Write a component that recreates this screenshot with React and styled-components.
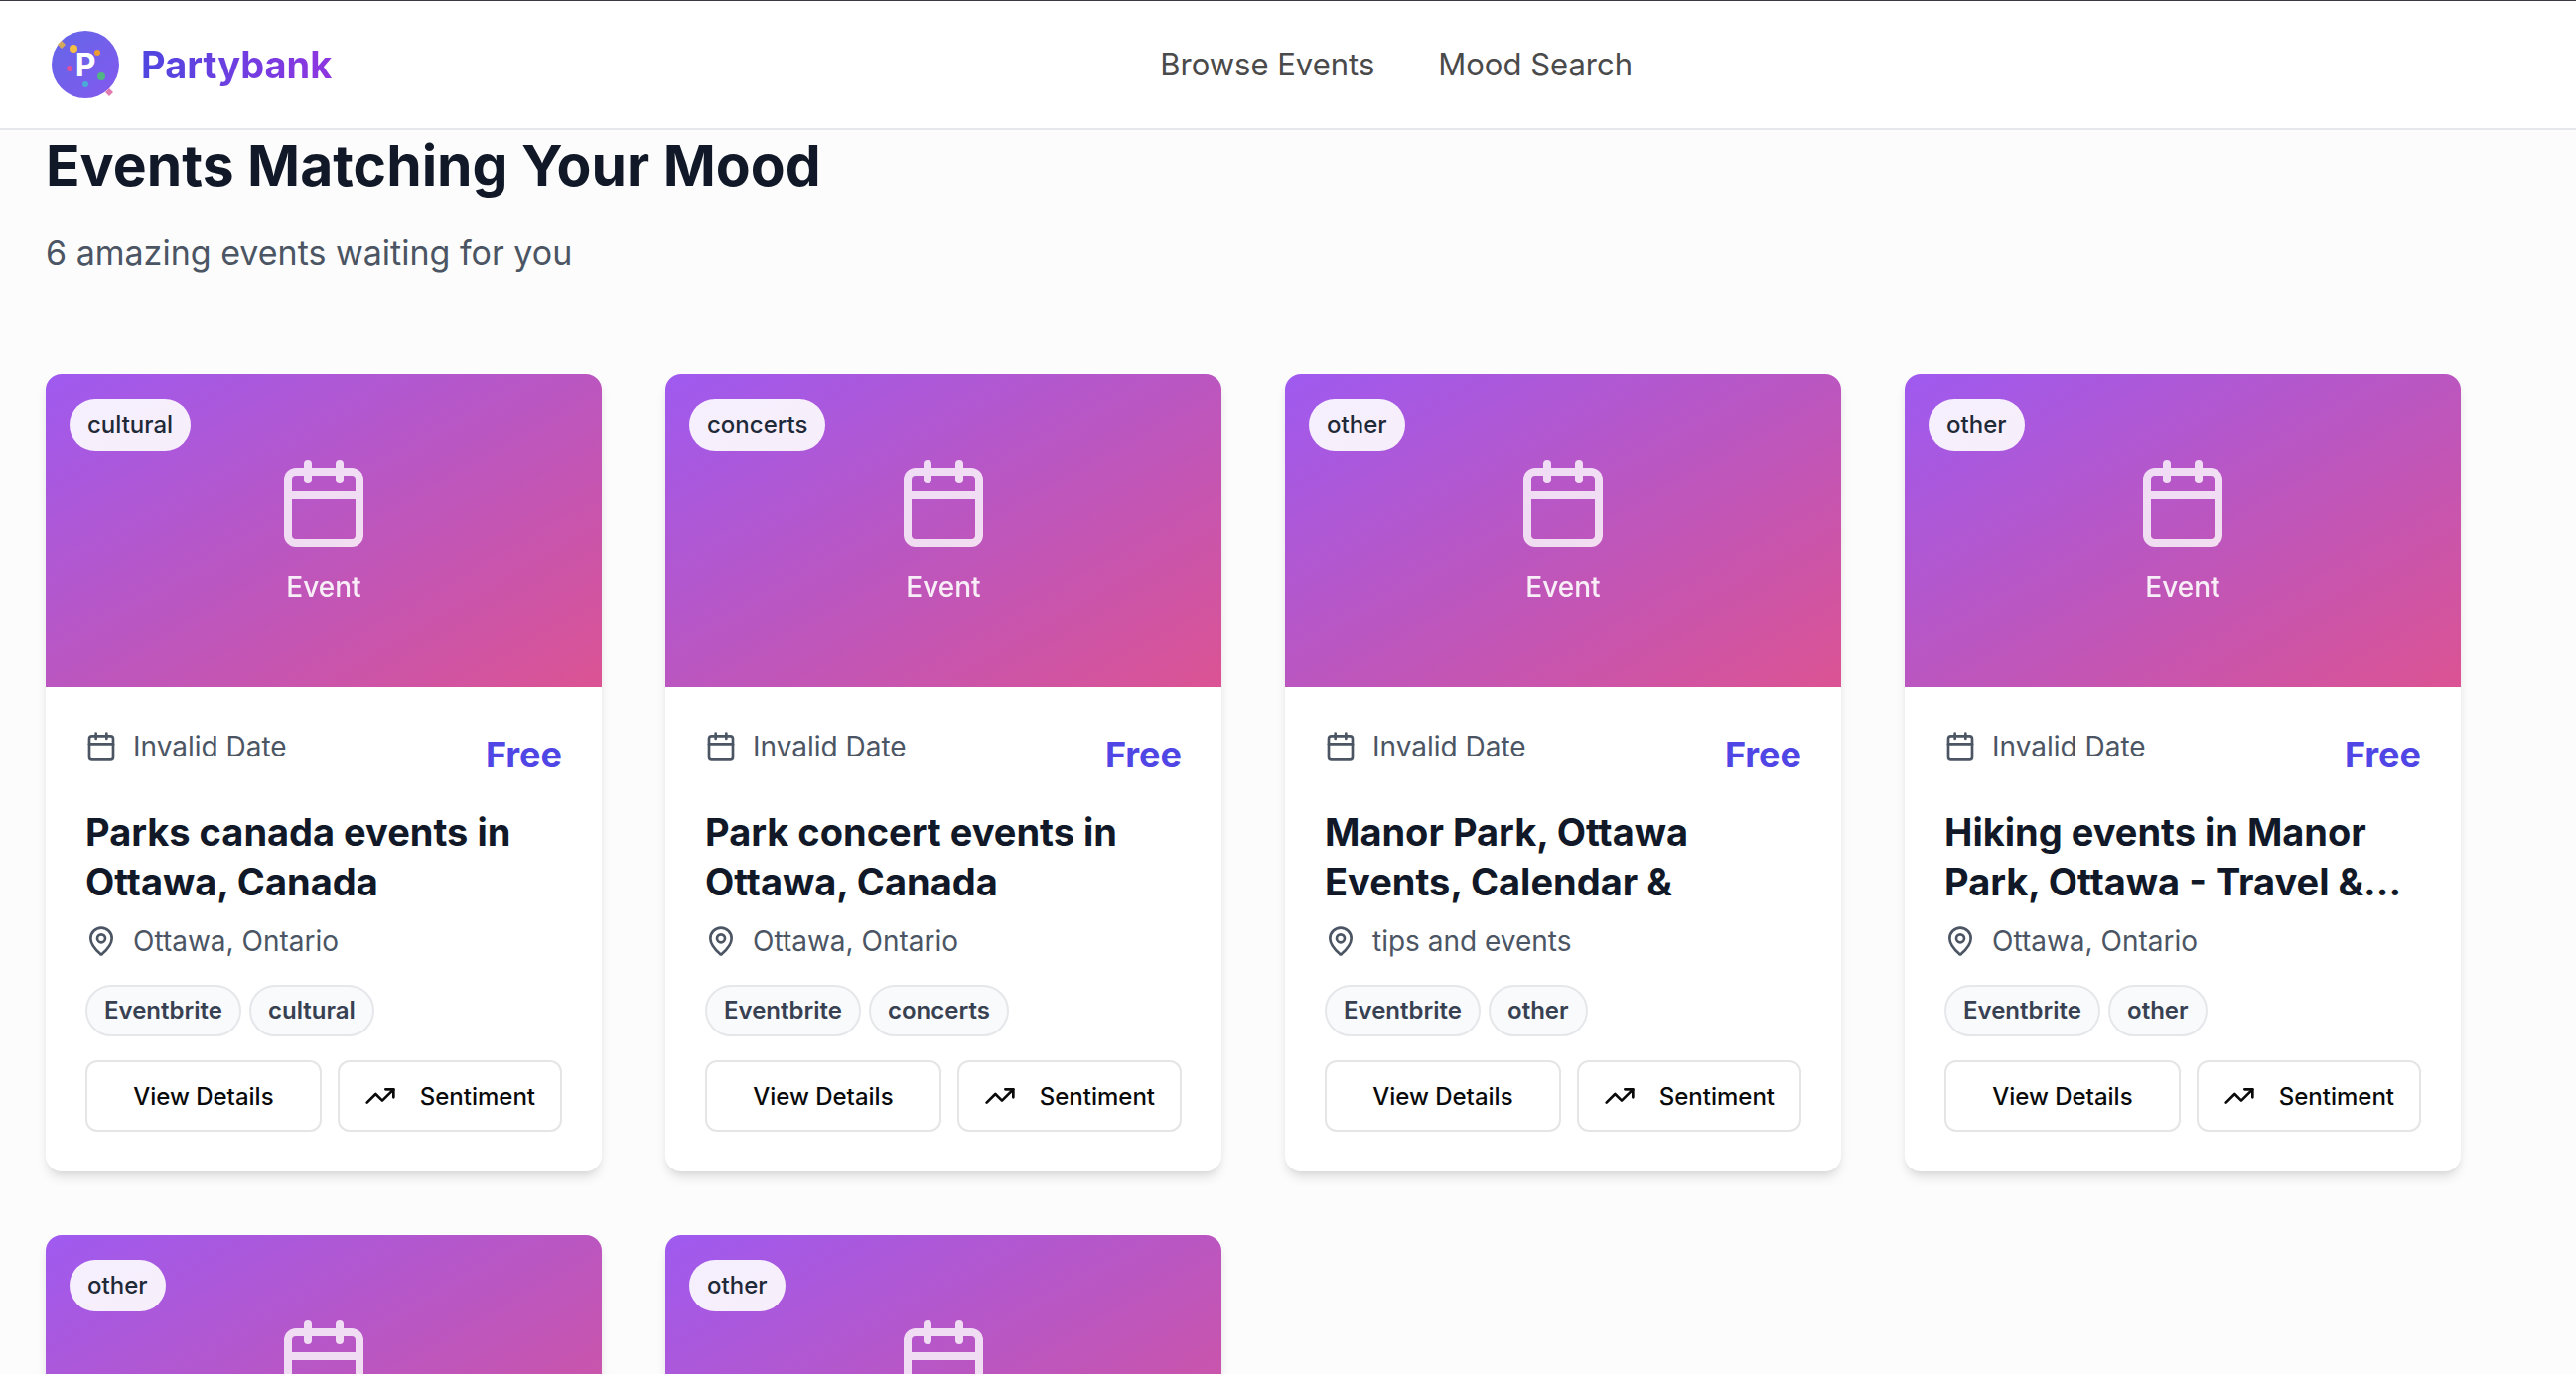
import styled, { createGlobalStyle } from "styled-components";
import { Calendar, MapPin, TrendingUp } from "lucide-react";

const GlobalStyle = createGlobalStyle`
  * {
    box-sizing: border-box;
  }

  body {
    margin: 0;
    background-color: #fcfcfc;
    font-family: Inter, "Liberation Sans", sans-serif;
    color: #111827;
  }

  h1,
  h2,
  p {
    margin: 0;
  }
`;

const Header = styled.header`
  padding: 0 116px 0 46px;
  background-color: white;
  border-top: 1px solid #3b3840;
  border-bottom: 2px solid #e5e7eb;
`;

const HeaderInner = styled.div`
  display: flex;
  align-items: center;
  justify-content: space-between;
  height: 128px;
`;

const Brand = styled.a`
  display: flex;
  align-items: center;
  gap: 16px;
  text-decoration: none;
`;

const BrandName = styled.span`
  font-size: 38px;
  font-weight: 700;
  line-height: 56px;
  color: transparent;
  background: linear-gradient(to right, #4f46e0, #8e36e0);
  background-clip: text;
`;

const Nav = styled.nav`
  display: flex;
  gap: 64px;
`;

const NavLink = styled.a`
  font-size: 31px;
  line-height: 48px;
  color: #4a4a4a;
  text-decoration: none;
`;

const HeaderActions = styled.div`
  display: flex;
`;

const Main = styled.main`
  padding: 0 116px 64px 46px;
`;

const Heading = styled.h1`
  font-size: 57px;
  font-weight: 700;
  line-height: 72px;
`;

const Subtitle = styled.p`
  margin: 24px 0 94px;
  font-size: 34px;
  line-height: 56px;
  color: #4b5563;
`;

const Grid = styled.div`
  display: grid;
  grid-template-columns: repeat(4, minmax(0, 1fr));
  gap: 64px;
`;

const Card = styled.article`
  overflow: hidden;
  background-color: white;
  border-radius: 16px;
  box-shadow: 0 8px 12px -2px rgba(0, 0, 0, 0.1), 0 4px 8px -4px rgba(0, 0, 0, 0.1);
`;

const Cover = styled.div`
  position: relative;
  display: flex;
  flex-direction: column;
  align-items: center;
  justify-content: center;
  gap: 16px;
  height: 315px;
  color: white;
  font-size: 28px;
  font-weight: 500;
  line-height: 40px;
  background: linear-gradient(to bottom right, #9f5af0, #bb56c0, #db5393);

  svg {
    opacity: 0.8;
  }
`;

const CoverLabel = styled.span`
  opacity: 0.9;
`;

const CoverBadge = styled.span`
  position: absolute;
  top: 25px;
  left: 24px;
  padding: 10px 18px;
  border-radius: 26px;
  background-color: rgba(255, 255, 255, 0.9);
  color: #1f2937;
  font-size: 24px;
  font-weight: 500;
  line-height: 32px;
`;

const CardBody = styled.div`
  padding: 40px;
`;

const CardTop = styled.div`
  display: flex;
  align-items: flex-start;
  justify-content: space-between;
  margin-bottom: 25px;
`;

const Meta = styled.div`
  display: flex;
  align-items: center;
  gap: 16px;
  font-size: 28px;
  line-height: 40px;
  color: #4b5563;
`;

const Price = styled.span`
  font-size: 36px;
  font-weight: 700;
  line-height: 56px;
  color: #4f46e5;
`;

const CardTitle = styled.h2`
  display: -webkit-box;
  -webkit-box-orient: vertical;
  -webkit-line-clamp: 2;
  overflow: hidden;
  height: 100px;
  margin-bottom: 15px;
  font-size: 38px;
  font-weight: 700;
  line-height: 50px;
`;

const Tags = styled.div`
  display: flex;
  gap: 8px;
  margin: 24px 0;
`;

const Tag = styled.span`
  padding: 8px 17px;
  border: 2px solid #e5e7eb;
  border-radius: 26px;
  background-color: #f9fafb;
  color: #374151;
  font-size: 24px;
  font-weight: 600;
  line-height: 32px;
`;

const Actions = styled.div`
  display: flex;
  gap: 16px;
`;

const ActionButton = styled.button`
  display: flex;
  flex: ${({ $grow }) => ($grow ? "1" : "none")};
  align-items: center;
  justify-content: center;
  gap: 24px;
  height: 72px;
  padding: 0 25px;
  border: 2px solid #e5e5e5;
  border-radius: 12px;
  background-color: white;
  color: #0a0a0a;
  font-family: inherit;
  font-size: 24px;
  font-weight: 500;
  cursor: pointer;

  &:hover {
    background-color: #f5f5f5;
  }
`;

const events = [
  { id: 1, category: "cultural", title: "Parks canada events in Ottawa, Canada", place: "Ottawa, Ontario" },
  { id: 2, category: "concerts", title: "Park concert events in Ottawa, Canada", place: "Ottawa, Ontario" },
  { id: 3, category: "other", title: "Manor Park, Ottawa Events, Calendar &", place: "tips and events" },
  { id: 4, category: "other", title: "Hiking events in Manor Park, Ottawa - Travel &...", place: "Ottawa, Ontario" },
  { id: 5, category: "other", title: "Events in Ottawa, Canada", place: "Ottawa, Ontario" },
  { id: 6, category: "other", title: "Events in Ottawa, Canada", place: "Ottawa, Ontario" },
];

function Logo() {
  return (
    <svg width="80" height="80" viewBox="0 0 80 80" aria-hidden="true">
      <defs>
        <linearGradient id="logo" x1="0" y1="0" x2="1" y2="1">
          <stop offset="0" stopColor="#6366e8" />
          <stop offset="1" stopColor="#8459ee" />
        </linearGradient>
      </defs>
      <circle cx="40" cy="40" r="34" fill="url(#logo)" />
      <circle cx="28" cy="24" r="4" fill="#f5bf45" />
      <circle cx="52" cy="28" r="3" fill="#ee9b30" />
      <circle cx="24" cy="44" r="3" fill="#db5299" />
      <circle cx="56" cy="52" r="4" fill="#51b585" />
      <circle cx="40" cy="60" r="3" fill="#49acd6" />
      <path d="M16 16l4 4-4 4-4-4z" fill="#d3a95e" />
      <path d="M64 64l4 4-4 4-4-4z" fill="#e27bb0" />
      <text x="40" y="52" textAnchor="middle" fontSize="32" fontWeight="700" fill="white">
        P
      </text>
    </svg>
  );
}

function EventCard({ event }) {
  return (
    <Card>
      <Cover>
        <Calendar size={96} />
        <CoverLabel>Event</CoverLabel>
        <CoverBadge>{event.category}</CoverBadge>
      </Cover>
      <CardBody>
        <CardTop>
          <Meta>
            <Calendar size={32} />
            <span>Invalid Date</span>
          </Meta>
          <Price>Free</Price>
        </CardTop>
        <CardTitle>{event.title}</CardTitle>
        <Meta>
          <MapPin size={32} />
          <span>{event.place}</span>
        </Meta>
        <Tags>
          <Tag>Eventbrite</Tag>
          <Tag>{event.category}</Tag>
        </Tags>
        <Actions>
          <ActionButton $grow>View Details</ActionButton>
          <ActionButton>
            <TrendingUp size={32} />
            Sentiment
          </ActionButton>
        </Actions>
      </CardBody>
    </Card>
  );
}

export default function App() {
  return (
    <>
      <GlobalStyle />
      <Header>
        <HeaderInner>
          <Brand href="#">
            <Logo />
            <BrandName>Partybank</BrandName>
          </Brand>
          <Nav>
            <NavLink href="#events">Browse Events</NavLink>
            <NavLink href="#mood">Mood Search</NavLink>
          </Nav>
          <HeaderActions />
        </HeaderInner>
      </Header>
      <Main>
        <Heading>Events Matching Your Mood</Heading>
        <Subtitle>{events.length} amazing events waiting for you</Subtitle>
        <Grid>
          {events.map((event) => (
            <EventCard key={event.id} event={event} />
          ))}
        </Grid>
      </Main>
    </>
  );
}
